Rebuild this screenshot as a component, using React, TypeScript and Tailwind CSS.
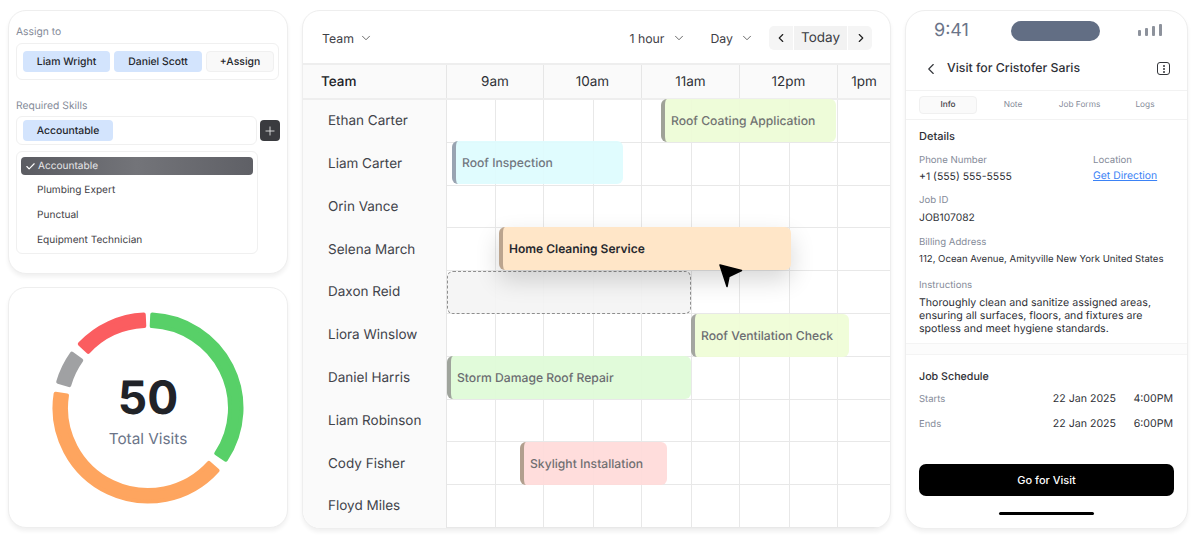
import React from "react";
import { ChevronDown, ChevronLeft, ChevronRight, Plus, Check } from "lucide-react";

const font = { fontFamily: "Inter, 'Liberation Sans', sans-serif" };

function sector(a0: number, a1: number, ro: number, ri: number, cx: number, cy: number) {
  const p = (r: number, a: number) => {
    const t = (a * Math.PI) / 180;
    return `${(cx + r * Math.sin(t)).toFixed(2)} ${(cy - r * Math.cos(t)).toFixed(2)}`;
  };
  const large = a1 - a0 > 180 ? 1 : 0;
  return `M${p(ro, a0)} A${ro} ${ro} 0 ${large} 1 ${p(ro, a1)} L${p(ri, a1)} A${ri} ${ri} 0 ${large} 0 ${p(ri, a0)} Z`;
}

const segments = [
  { a0: 2.6, a1: 123.6, c: "#58d068" },
  { a0: 132, a1: 278.8, c: "#fea55f" },
  { a0: 286.2, a1: 305.5, c: "#a0a1a3" },
  { a0: 313.2, a1: 357.4, c: "#fb5d60" },
];

function Donut() {
  return (
    <div className="relative w-[192px] h-[192px]">
      <svg width="192" height="192" viewBox="0 0 192 192">
        {segments.map((s) => (
          <path key={s.c} d={sector(s.a0, s.a1, 93.5, 82, 96, 96)} fill={s.c} stroke={s.c} strokeWidth="4" strokeLinejoin="round" />
        ))}
      </svg>
      <div className="absolute inset-0 flex flex-col items-center pt-[58px]">
        <span className="text-[46px] leading-[56px] font-bold text-[#212328]">50</span>
        <span className="text-[15.3px] leading-[20px] mt-[3px] text-[#6b7488]">Total Visits</span>
      </div>
    </div>
  );
}

function Chip({ children, w }: { children: React.ReactNode; w: string }) {
  return (
    <div className={`${w} h-[21px] rounded-[4px] bg-[#d3e4fd] flex items-center justify-center text-[10.4px] font-medium text-[#24262b]`}>
      {children}
    </div>
  );
}

function LeftColumn() {
  return (
    <div className="w-[280px] flex flex-col gap-[13px]">
      <div className="h-[264px] rounded-[18px] border border-[#eeeeee] bg-white shadow-[0_3px_4px_rgba(0,0,0,0.06)] px-[7px] pt-[14px]">
        <div className="text-[10.3px] leading-[14px] text-[#858b99]">Assign to</div>
        <div className="mt-[4px] h-[37px] w-[263px] rounded-[6px] border border-[#f0f0f0] flex items-center gap-[4px] pl-[6px]">
          <Chip w="w-[87px]">Liam Wright</Chip>
          <Chip w="w-[88px]">Daniel Scott</Chip>
          <div className="w-[68px] h-[21px] rounded-[4px] bg-[#f9f9f9] border border-[#f0f0f0] flex items-center justify-center text-[10.4px] font-medium text-[#24262b]">+Assign</div>
        </div>
        <div className="mt-[19px] text-[10.3px] leading-[14px] text-[#858b99]">Required Skills</div>
        <div className="mt-[3px] flex items-center gap-[3px]">
          <div className="w-[242px] h-[29px] rounded-[6px] border border-[#f0f0f0] flex items-center pl-[6px]">
            <Chip w="w-[90px]">Accountable</Chip>
          </div>
          <div className="w-[20px] h-[21px] rounded-[4px] bg-[#3a3b3f] flex items-center justify-center">
            <Plus size={14} strokeWidth={1.5} className="text-[#e8e8e8]" />
          </div>
        </div>
        <div className="mt-[6px] w-[242px] h-[103px] rounded-[6px] border border-[#f0f0f0] px-[4px] pt-[5px] text-[10.1px] text-[#3f4147]">
          <div className="h-[18px] rounded-[4px] bg-gradient-to-r from-[#5b5c62] via-[#737479] to-[#5f6066] flex items-center pl-[4px] pt-[1px] text-[#e6e6e8]">
            <Check size={11} strokeWidth={2.5} className="text-white mr-[2px]" />
            Accountable
          </div>
          <div className="mt-[5px] pl-[16px] h-[20px] leading-[20px]">Plumbing Expert</div>
          <div className="mt-[5px] pl-[16px] h-[20px] leading-[20px]">Punctual</div>
          <div className="mt-[5px] pl-[16px] h-[20px] leading-[20px]">Equipment Technician</div>
        </div>
      </div>
      <div className="h-[241px] rounded-[18px] border border-[#eeeeee] bg-white shadow-[0_3px_4px_rgba(0,0,0,0.06)] flex items-center justify-center">
        <Donut />
      </div>
    </div>
  );
}

const names = ["Ethan Carter", "Liam Carter", "Orin Vance", "Selena March", "Daxon Reid", "Liora Winslow", "Daniel Harris", "Liam Robinson", "Cody Fisher", "Floyd Miles"];
const hours = [
  { t: "9am", w: "w-[97px]" },
  { t: "10am", w: "w-[98px]" },
  { t: "11am", w: "w-[98px]" },
  { t: "12pm", w: "w-[98px]" },
  { t: "1pm", w: "flex-1" },
];
const cells = ["w-[49px]", "w-[48px]", "w-[50px]", "w-[48px]", "w-[50px]", "w-[48px]", "w-[50px]", "w-[48px]", "flex-1"];

const events = [
  { t: "Roof Coating Application", l: 214, w: 175, top: -1, bg: "#eefcd8", bar: "#9a9e93", c: "#6a6d6b" },
  { t: "Roof Inspection", l: 5, w: 171, top: 41, bg: "#dffcfe", bar: "#94a0ae", c: "#6a7079" },
  { t: "Roof Ventilation Check", l: 244, w: 158, top: 214, bg: "#f0fdd8", bar: "#a0a29c", c: "#64666a" },
  { t: "Storm Damage Roof Repair", l: 0, w: 244, top: 256, bg: "#e0fbd9", bar: "#9aa097", c: "#64666a" },
  { t: "Skylight Installation", l: 73, w: 147, top: 342, bg: "#ffdcdb", bar: "#ad9a88", c: "#6a686a" },
];

function Event({ e }: { e: (typeof events)[number] }) {
  return (
    <div
      className="absolute h-[43px] rounded-[6px] border-l-[4px] flex items-center pl-[6px] pt-[1px] text-[12.15px] font-medium whitespace-nowrap opacity-95"
      style={{ left: e.l, width: e.w, top: e.top, background: e.bg, borderLeftColor: e.bar, color: e.c }}
    >
      {e.t}
    </div>
  );
}

function Gantt() {
  return (
    <div className="w-[589px] h-[519px] rounded-[18px] border border-[#eeeeee] bg-white shadow-[0_3px_4px_rgba(0,0,0,0.06)] overflow-hidden flex flex-col">
      <div className="h-[52px] shrink-0 pt-[2px] flex items-center pl-[19px] pr-[18px] text-[12.3px] text-[#3f4147]">
        <span className="pt-[2px]">Team</span>
        <ChevronDown size={14} strokeWidth={1.5} className="ml-[5px] text-[#555]" />
        <span className="ml-auto pt-[2px]">1 hour</span>
        <ChevronDown size={14} strokeWidth={1.5} className="ml-[8px] text-[#555]" />
        <span className="ml-[24px] pt-[2px]">Day</span>
        <ChevronDown size={14} strokeWidth={1.5} className="ml-[7px] text-[#555] mr-[15px]" />
        <div className="h-[24px] rounded-[5px] bg-[#f5f5f5] flex items-center gap-[1px] overflow-hidden">
          <div className="w-[23px] h-full flex items-center justify-center"><ChevronLeft size={14} strokeWidth={2} className="text-[#222]" /></div>
          <div className="w-[55px] h-full bg-[#f2f2f2] border-x border-white flex items-center justify-center text-[13.5px] text-[#3a3c42]">Today</div>
          <div className="w-[23px] h-full flex items-center justify-center"><ChevronRight size={14} strokeWidth={2} className="text-[#222]" /></div>
        </div>
      </div>
      <div className="h-[37px] shrink-0 flex bg-[#fafafa] border-y-2 border-[#eeeeee] text-[#2e3036]">
        <div className="w-[144px] flex items-center pl-[18px] pt-[1px] text-[13.5px] font-medium text-[#202227] border-r border-[#e6e6e6]">Team</div>
        {hours.map((h) => (
          <div key={h.t} className={`${h.w} flex items-center justify-center pt-[1px] text-[13.5px] border-r border-[#e6e6e6] last:border-r-0`}>{h.t}</div>
        ))}
      </div>
      <div className="flex-1 flex min-h-0">
        <div className="w-[144px] bg-[#fafafa] rounded-bl-[18px] border-r border-[#e6e6e6] flex flex-col">
          {names.map((n) => (
            <div key={n} className="flex-1 flex items-center pl-[25px] text-[13.5px] text-[#41434a]">{n}</div>
          ))}
        </div>
        <div className="relative flex-1 flex flex-col">
          {names.map((n) => (
            <div key={n} className="flex-1 flex border-b border-[#e8e8e8] last:border-b-0">
              {cells.map((c, i) => (
                <div key={i} className={`${c} border-r border-[#e8e8e8] last:border-r-0`} />
              ))}
            </div>
          ))}
          {events.map((e) => (
            <Event key={e.t} e={e} />
          ))}
          <div className="absolute left-0 top-[171px] w-[244px] h-[43px] rounded-[6px] border border-dashed border-[#8f8f8f] bg-[#f4f4f4]/90" />
          <div className="absolute left-[52px] top-[127px] w-[292px] h-[43px] rounded-[6px] border-l-[4px] border-l-[#bba48e] bg-[#ffe6c8] shadow-[0_10px_24px_rgba(0,0,0,0.16)] flex items-center pl-[6px] text-[12px] font-semibold text-[#26282e]">
            Home Cleaning Service
          </div>
          <svg className="absolute left-[271px] top-[163px]" width="26" height="26" viewBox="0 0 26 26">
            <path d="M2 2 L23.5 7.5 L11 13.5 L9 23.5 Z" fill="#000" stroke="#000" strokeWidth="1.5" strokeLinejoin="round" />
          </svg>
        </div>
      </div>
    </div>
  );
}

function Label({ children }: { children: React.ReactNode }) {
  return <div className="text-[9.6px] leading-[13px] text-[#858b99]">{children}</div>;
}

function Phone() {
  return (
    <div className="w-[283px] h-[519px] rounded-[20px] border border-[#eeeeee] bg-white shadow-[0_3px_4px_rgba(0,0,0,0.06)] flex flex-col text-[#2e3036]">
      <div className="h-[39px] pt-[8px] flex items-start pl-[28px] pr-[25px]">
        <span className="text-[18px] leading-[24px] text-[#6b7488]">9:41</span>
        <div className="ml-[42px] w-[89px] h-[20px] mt-[2px] rounded-full bg-[#626e84]" />
        <div className="ml-auto flex items-end gap-[4px] h-[12px] mt-[5px]">
          <div className="w-[3px] h-[6px] bg-[#8d929c] rounded-[1px]" />
          <div className="w-[3px] h-[8px] bg-[#8d929c] rounded-[1px]" />
          <div className="w-[3px] h-[10px] bg-[#8d929c] rounded-[1px]" />
          <div className="w-[3px] h-[12px] bg-[#8d929c] rounded-[1px]" />
        </div>
      </div>
      <div className="h-[41px] pb-[3px] border-b border-[#f2f2f2] flex items-center pl-[16px] pr-[17px]">
        <ChevronLeft size={18} strokeWidth={1.5} className="text-[#33353a]" />
        <span className="ml-[7px] text-[12.3px] font-medium">Visit for Cristofer Saris</span>
        <div className="ml-auto w-[13px] h-[13px] rounded-[3px] border-[1.5px] border-[#33353a] flex flex-col items-center justify-center gap-[1px]">
          <div className="w-[2px] h-[2px] rounded-full bg-[#33353a]" />
          <div className="w-[2px] h-[2px] rounded-full bg-[#33353a]" />
          <div className="w-[2px] h-[2px] rounded-full bg-[#33353a]" />
        </div>
      </div>
      <div className="h-[29px] border-b border-[#f2f2f2] flex items-center pl-[13px] text-[8.3px] text-[#858b99]">
        <div className="w-[58px] h-[18px] rounded-[4px] bg-[#fafafa] border border-[#f0f0f0] flex items-center justify-center font-medium text-[#3f4147]">Info</div>
        <div className="w-[72px] text-center">Note</div>
        <div className="w-[61px] text-center">Job Forms</div>
        <div className="w-[70px] text-center">Logs</div>
      </div>
      <div className="px-[13px] pt-[9px] h-[223px]">
        <div className="text-[11px] leading-[14px] font-medium">Details</div>
        <div className="mt-[11px] flex">
          <div className="w-[174px]">
            <Label>Phone Number</Label>
            <div className="mt-[3px] text-[10.45px] leading-[14px]">+1 (555) 555-5555</div>
          </div>
          <div>
            <Label>Location</Label>
            <div className="mt-[2px] text-[10.4px] leading-[14px] text-[#3b82f6] underline">Get Direction</div>
          </div>
        </div>
        <div className="mt-[10px]"><Label>Job ID</Label></div>
        <div className="mt-[4px] text-[10.3px] leading-[14px]">JOB107082</div>
        <div className="mt-[11px]"><Label>Billing Address</Label></div>
        <div className="mt-[4px] text-[9.6px] leading-[14px] whitespace-nowrap">112, Ocean Avenue, Amityville New York United States</div>
        <div className="mt-[12px]"><Label>Instructions</Label></div>
        <div className="mt-[4px] text-[10.6px] leading-[13px] w-[250px]">
          Thoroughly clean and sanitize assigned areas, ensuring all surfaces, floors, and fixtures are spotless and meet hygiene standards.
        </div>
      </div>
      <div className="h-[12px] bg-[#fcfcfc] border-y border-[#f4f4f4]" />
      <div className="px-[13px] pt-[15px] flex-1 flex flex-col">
        <div className="text-[10.7px] leading-[14px] font-medium">Job Schedule</div>
        <div className="mt-[8px] h-[14px] pr-[1px] flex items-center text-[10.6px]">
          <span className="text-[9.5px] pt-[2px] text-[#858b99]">Starts</span>
          <span className="ml-auto">22 Jan 2025</span>
          <span className="w-[57px] text-right">4:00PM</span>
        </div>
        <div className="mt-[11px] h-[14px] pr-[1px] flex items-center text-[10.6px]">
          <span className="text-[9.5px] pt-[2px] text-[#858b99]">Ends</span>
          <span className="ml-auto">22 Jan 2025</span>
          <span className="w-[57px] text-right">6:00PM</span>
        </div>
        <div className="mt-[33px] h-[32px] rounded-[7px] bg-black flex items-center justify-center text-[11px] font-medium text-white">Go for Visit</div>
        <div className="mt-[16px] mx-auto w-[95px] h-[3px] rounded-full bg-black" />
      </div>
    </div>
  );
}

export default function App() {
  return (
    <div style={font} className="w-[1200px] h-[540px] bg-white flex items-start pt-[10px] pl-[8px] gap-[14px] overflow-hidden [text-rendering:geometricPrecision]">
      <LeftColumn />
      <Gantt />
      <Phone />
    </div>
  );
}
